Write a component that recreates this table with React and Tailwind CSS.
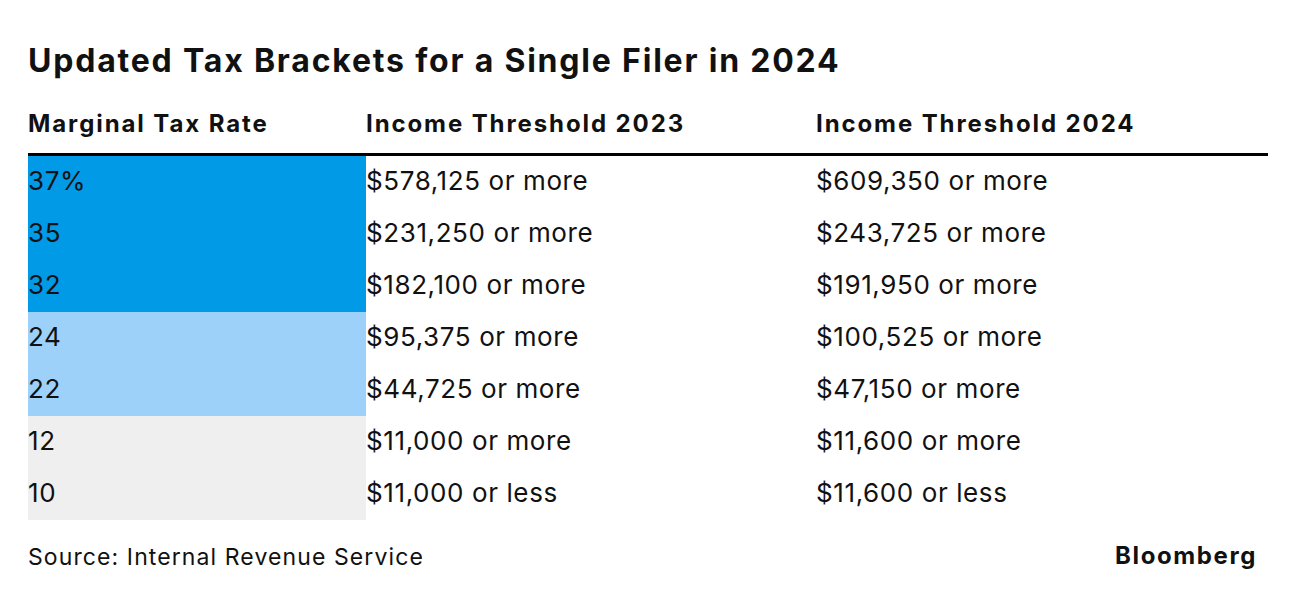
export default function App() {
  const rows = [
    { r: "37%", a: "$578,125 or more", b: "$609,350 or more", bg: "bg-[#009ae6]" },
    { r: "35", a: "$231,250 or more", b: "$243,725 or more", bg: "bg-[#009ae6]" },
    { r: "32", a: "$182,100 or more", b: "$191,950 or more", bg: "bg-[#009ae6]" },
    { r: "24", a: "$95,375 or more", b: "$100,525 or more", bg: "bg-[#9ed1fa]" },
    { r: "22", a: "$44,725 or more", b: "$47,150 or more", bg: "bg-[#9ed1fa]" },
    { r: "12", a: "$11,000 or more", b: "$11,600 or more", bg: "bg-[#efefef]" },
    { r: "10", a: "$11,000 or less", b: "$11,600 or less", bg: "bg-[#efefef]" },
  ];
  return (
    <div className="w-[1296px] h-[600px] bg-white text-[#111] font-['Inter','Liberation_Sans',sans-serif] overflow-hidden">
      <div className="pl-[28px] pr-[28px] pt-[43px]">
        <h1 className="text-[32px] leading-[36px] font-bold tracking-[1.8px]">
          Updated Tax Brackets for a Single Filer in 2024
        </h1>
        <div className="mt-[31px] grid grid-cols-[338px_450px_452px] pb-[15px] border-b-[3px] border-black text-[24px] leading-[28px] font-bold tracking-[1.9px]">
          <div>Marginal Tax Rate</div>
          <div>Income Threshold 2023</div>
          <div>Income Threshold 2024</div>
        </div>
        <div className="flex flex-col text-[26px] tracking-[0.6px]">
          {rows.map((row) => (
            <div key={row.r} className="grid grid-cols-[338px_450px_452px] h-[52px] leading-[50px]">
              <div className={row.bg}>{row.r}</div>
              <div>{row.a}</div>
              <div>{row.b}</div>
            </div>
          ))}
        </div>
        <div className="mt-[22px] flex justify-between items-start">
          <div className="pt-[1px] text-[23px] leading-[28px] tracking-[1.1px]">Source: Internal Revenue Service</div>
          <div className="mr-[11px] text-[24px] leading-[28px] font-bold tracking-[1.6px]">Bloomberg</div>
        </div>
      </div>
    </div>
  );
}
